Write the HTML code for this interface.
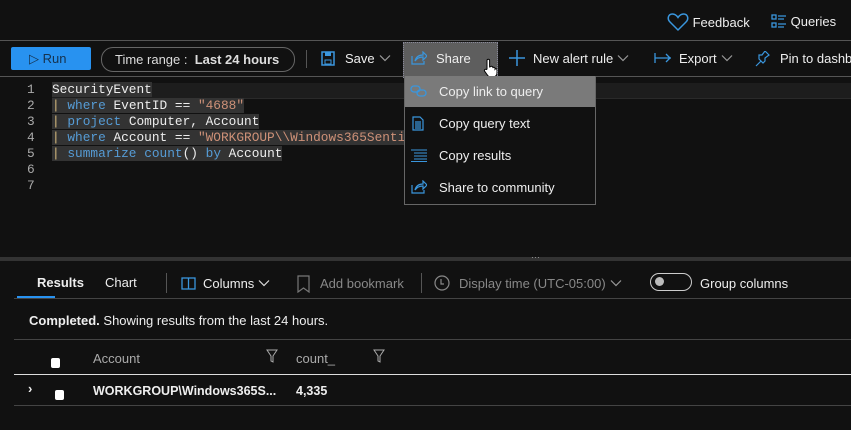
<!DOCTYPE html>
<html><head><style>
body{margin:0;width:851px;height:430px;background:#111;overflow:hidden;font-family:"Liberation Sans",sans-serif;color:#eee;position:relative;font-size:13px}
.a{position:absolute;white-space:nowrap}
.code{font-family:"Liberation Mono",monospace;font-size:12.8px;line-height:16px}
.kw{color:#569cd6}.st{color:#ce9178}
.b{color:#3a96dd}
.chev{display:inline-block;width:12px;height:8px;margin-left:4px;vertical-align:1px}
</style></head><body>
<svg width="0" height="0" style="position:absolute"><defs><symbol id="cv" viewBox="0 0 12 8"><path d="M1 1.5l5 5 5-5" fill="none" stroke="#999" stroke-width="1.2"/></symbol></defs></svg>
<div class="a" style="left:667px;top:12px"><svg width="22" height="20" style="vertical-align:-5px"><path d="M11 18L3 10C0 7 1 2 5.5 2 8 2 10 4 11 5.5 12 4 14 2 16.5 2 21 2 22 7 19 10z" fill="none" stroke="#3a96dd" stroke-width="1.5"/></svg> Feedback</div>
<div class="a" style="left:771px;top:14px"><svg width="16" height="14" style="vertical-align:-2px"><g fill="none" stroke="#3a96dd" stroke-width="1.3"><rect x="1" y="1" width="4" height="4"/><rect x="1" y="9" width="4" height="4"/><path d="M7 2h8M7 5h6M7 10h8M7 13h6"/></g></svg> Queries</div>
<div class="a" style="left:0;top:40px;width:851px;height:1px;background:#555"></div>
<div class="a" style="left:0;top:76px;width:851px;height:1px;background:#555"></div>
<div class="a" style="left:11px;top:47px;width:80px;height:23px;background:#2892f0;border-radius:2px;color:#16324d;font-size:13px;line-height:23px"><span style="margin-left:18px">▷ Run</span></div>
<div class="a" style="left:101px;top:47px;width:192px;height:23px;border:1px solid #666;border-radius:12px;line-height:23px;font-size:13px;color:#ddd"><span style="margin-left:13px">Time range :&nbsp; <b>Last 24 hours</b></span></div>
<div class="a" style="left:306px;top:50px;width:1px;height:18px;background:#555"></div>
<div class="a" style="left:321px;top:51px"><svg width="14" height="15"><rect x="1" y="1" width="12" height="13" fill="none" stroke="#3a96dd" stroke-width="1.5"/><rect x="4" y="1" width="6" height="4" fill="#3a96dd"/><rect x="4" y="9" width="6" height="4" fill="none" stroke="#3a96dd"/></svg></div>
<div class="a" style="left:345px;top:51px">Save<svg class="chev"><use href="#cv"/></svg></div>
<div class="a" style="left:403px;top:42px;width:93px;height:34px;background:#5e5e5e;border:1px dotted #889"></div>
<div class="a" style="left:411px;top:51px"><svg width="16" height="14"><path d="M1 5v8h12v-3M4 10c1-4 4-6 8-6V1l4 4-4 4V6c-3 0-6 1-8 4z" fill="none" stroke="#3a96dd" stroke-width="1.2"/></svg></div>
<div class="a" style="left:436px;top:51px">Share</div>
<div class="a" style="left:483px;top:58px"><svg width="14" height="20"><path d="M4 11V2.5a1.3 1.3 0 012.6 0V9l1-.3a1.3 1.3 0 012.2 .6l.2.3a1.2 1.2 0 012 .6v1a1.1 1.1 0 012 .6V15c0 2-1.5 4-4 4H7.5C6 19 5 18 4 16.5L1.5 13a1.3 1.3 0 012-1.5z" fill="#fff" stroke="#000" stroke-width="1"/></svg></div>
<div class="a" style="left:509px;top:50px"><svg width="16" height="16"><path d="M8 0v16M0 8h16" stroke="#3a96dd" stroke-width="1.5"/></svg></div>
<div class="a" style="left:533px;top:51px">New alert rule<svg class="chev"><use href="#cv"/></svg></div>
<div class="a" style="left:654px;top:52px"><svg width="18" height="12"><path d="M1 1v10M1 6h16M12 2l4 4-4 4" fill="none" stroke="#3a96dd" stroke-width="1.3"/></svg></div>
<div class="a" style="left:679px;top:51px">Export<svg class="chev"><use href="#cv"/></svg></div>
<div class="a" style="left:755px;top:51px"><svg width="16" height="16"><path d="M1 15l5-5M4 8l4 4 2-2 0-3 4-3-4-4-3 4h-3z" fill="none" stroke="#3a96dd" stroke-width="1.2"/></svg></div>
<div class="a" style="left:780px;top:51px">Pin to dashboard</div>

<div class="a" style="left:52px;top:83px;width:799px;height:15px;background:#1d1d1d;border-bottom:1px solid #2a2a2a"></div>
<div class="a code" style="left:27px;top:82px;color:#aaa">1<br>2<br>3<br>4<br>5<br>6<br>7</div>
<div class="a code" style="left:52px;top:82px;color:#eee">
<span style="background:#333">SecurityEvent</span><br>
<span style="background:#333"><span style="color:#d7ba7d">|</span> <span class="kw">where</span> EventID == <span class="st">"4688"</span></span><br>
<span style="background:#333"><span style="color:#d7ba7d">|</span> <span class="kw">project</span> Computer, Account</span><br>
<span style="background:#333"><span style="color:#d7ba7d">|</span> <span class="kw">where</span> Account == <span class="st">"WORKGROUP\\Windows365Sentinel</span></span><br>
<span style="background:#333"><span style="color:#d7ba7d">|</span> <span class="kw">summarize</span> <span class="kw">count</span>() <span class="kw">by</span> Account</span></div>

<div class="a" style="left:404px;top:76px;width:190px;height:127px;background:#111;border:1px solid #666"></div>
<div class="a" style="left:405px;top:76px;width:190px;height:31px;background:#7a7a7a"></div>
<div class="a" style="left:410px;top:85px"><svg width="18" height="12"><g fill="none" stroke="#3a96dd" stroke-width="1.3"><rect x="1" y="1" width="9" height="6" rx="3"/><rect x="7" y="5" width="9" height="6" rx="3"/></g></svg></div>
<div class="a" style="left:439px;top:84px">Copy link to query</div>
<div class="a" style="left:412px;top:116px"><svg width="12" height="15"><path d="M1 1h7l3 3v10H1z M3 6h6M3 8h6M3 10h6M3 12h6" fill="none" stroke="#3a96dd" stroke-width="1.2"/></svg></div>
<div class="a" style="left:439px;top:116px">Copy query text</div>
<div class="a" style="left:411px;top:149px"><svg width="16" height="13"><path d="M0 1h16M3 4h13M3 7h13M3 10h13M0 12.5h16" stroke="#3a96dd" stroke-width="1"/></svg></div>
<div class="a" style="left:439px;top:148px">Copy results</div>
<div class="a" style="left:411px;top:180px"><svg width="16" height="14"><path d="M1 5v8h12v-3M4 10c1-4 4-6 8-6V1l4 4-4 4V6c-3 0-6 1-8 4z" fill="none" stroke="#3a96dd" stroke-width="1.2"/></svg></div>
<div class="a" style="left:439px;top:180px">Share to community</div>

<div class="a" style="left:0;top:257px;width:851px;height:4px;background:#333"></div>
<div class="a" style="left:531px;top:252px;color:#999;font-size:9px">···</div>
<div class="a" style="left:37px;top:275px;font-weight:bold">Results</div>
<div class="a" style="left:17px;top:296px;width:38px;height:2px;background:#2892f0"></div>
<div class="a" style="left:105px;top:275px">Chart</div>
<div class="a" style="left:166px;top:273px;width:1px;height:20px;background:#555"></div>
<div class="a" style="left:181px;top:277px"><svg width="15" height="13"><rect x="1" y="1" width="13" height="11" fill="none" stroke="#3a96dd" stroke-width="1.3"/><path d="M7.5 1v11" stroke="#3a96dd" stroke-width="1.3"/></svg></div>
<div class="a" style="left:203px;top:276px">Columns<svg class="chev"><path d="M1 1.5l5 5 5-5" fill="none" stroke="#ddd" stroke-width="1.2"/></svg></div>
<div class="a" style="left:297px;top:275px"><svg width="13" height="18"><path d="M1 1h11v16l-5.5-4L1 17z" fill="none" stroke="#777" stroke-width="1.2"/></svg></div>
<div class="a" style="left:320px;top:276px;color:#888">Add bookmark</div>
<div class="a" style="left:421px;top:273px;width:1px;height:20px;background:#555"></div>
<div class="a" style="left:434px;top:275px"><svg width="16" height="16"><circle cx="8" cy="8" r="7" fill="none" stroke="#888" stroke-width="1.2"/><path d="M7 4v5h3" fill="none" stroke="#888" stroke-width="1.2"/></svg></div>
<div class="a" style="left:459px;top:276px;color:#888">Display time (UTC-05:00)<svg class="chev"><use href="#cv"/></svg></div>
<div class="a" style="left:650px;top:273px;width:40px;height:16px;border:1px solid #ccc;border-radius:9px"></div>
<div class="a" style="left:655px;top:277px;width:9px;height:9px;border-radius:50%;background:#bbb"></div>
<div class="a" style="left:700px;top:276px">Group columns</div>
<div class="a" style="left:14px;top:298px;width:837px;height:1px;background:#444"></div>
<div class="a" style="left:29px;top:313px"><b>Completed.</b> Showing results from the last 24 hours.</div>
<div class="a" style="left:14px;top:339px;width:837px;height:1px;background:#444"></div>
<div class="a" style="left:51px;top:358px;width:9px;height:10px;background:#fff;border-radius:2px"></div>
<div class="a" style="left:93px;top:351px;color:#aaa">Account</div>
<div class="a" style="left:266px;top:349px"><svg width="12" height="14"><path d="M1 1h10L7 7v6L5 12V7z" fill="none" stroke="#aaa" stroke-width="1"/></svg></div>
<div class="a" style="left:296px;top:351px;color:#aaa">count_</div>
<div class="a" style="left:373px;top:349px"><svg width="12" height="14"><path d="M1 1h10L7 7v6L5 12V7z" fill="none" stroke="#aaa" stroke-width="1"/></svg></div>
<div class="a" style="left:14px;top:374px;width:837px;height:1px;background:#ddd"></div>
<div class="a" style="left:28px;top:381px;font-weight:bold">›</div>
<div class="a" style="left:55px;top:390px;width:9px;height:10px;background:#fff;border-radius:2px"></div>
<div class="a" style="left:93px;top:384px;font-weight:bold;font-size:12.5px">WORKGROUP\Windows365S...</div>
<div class="a" style="left:296px;top:384px;font-weight:bold;font-size:12.5px">4,335</div>
<div class="a" style="left:14px;top:405px;width:837px;height:1px;background:#444"></div>
</body></html>
